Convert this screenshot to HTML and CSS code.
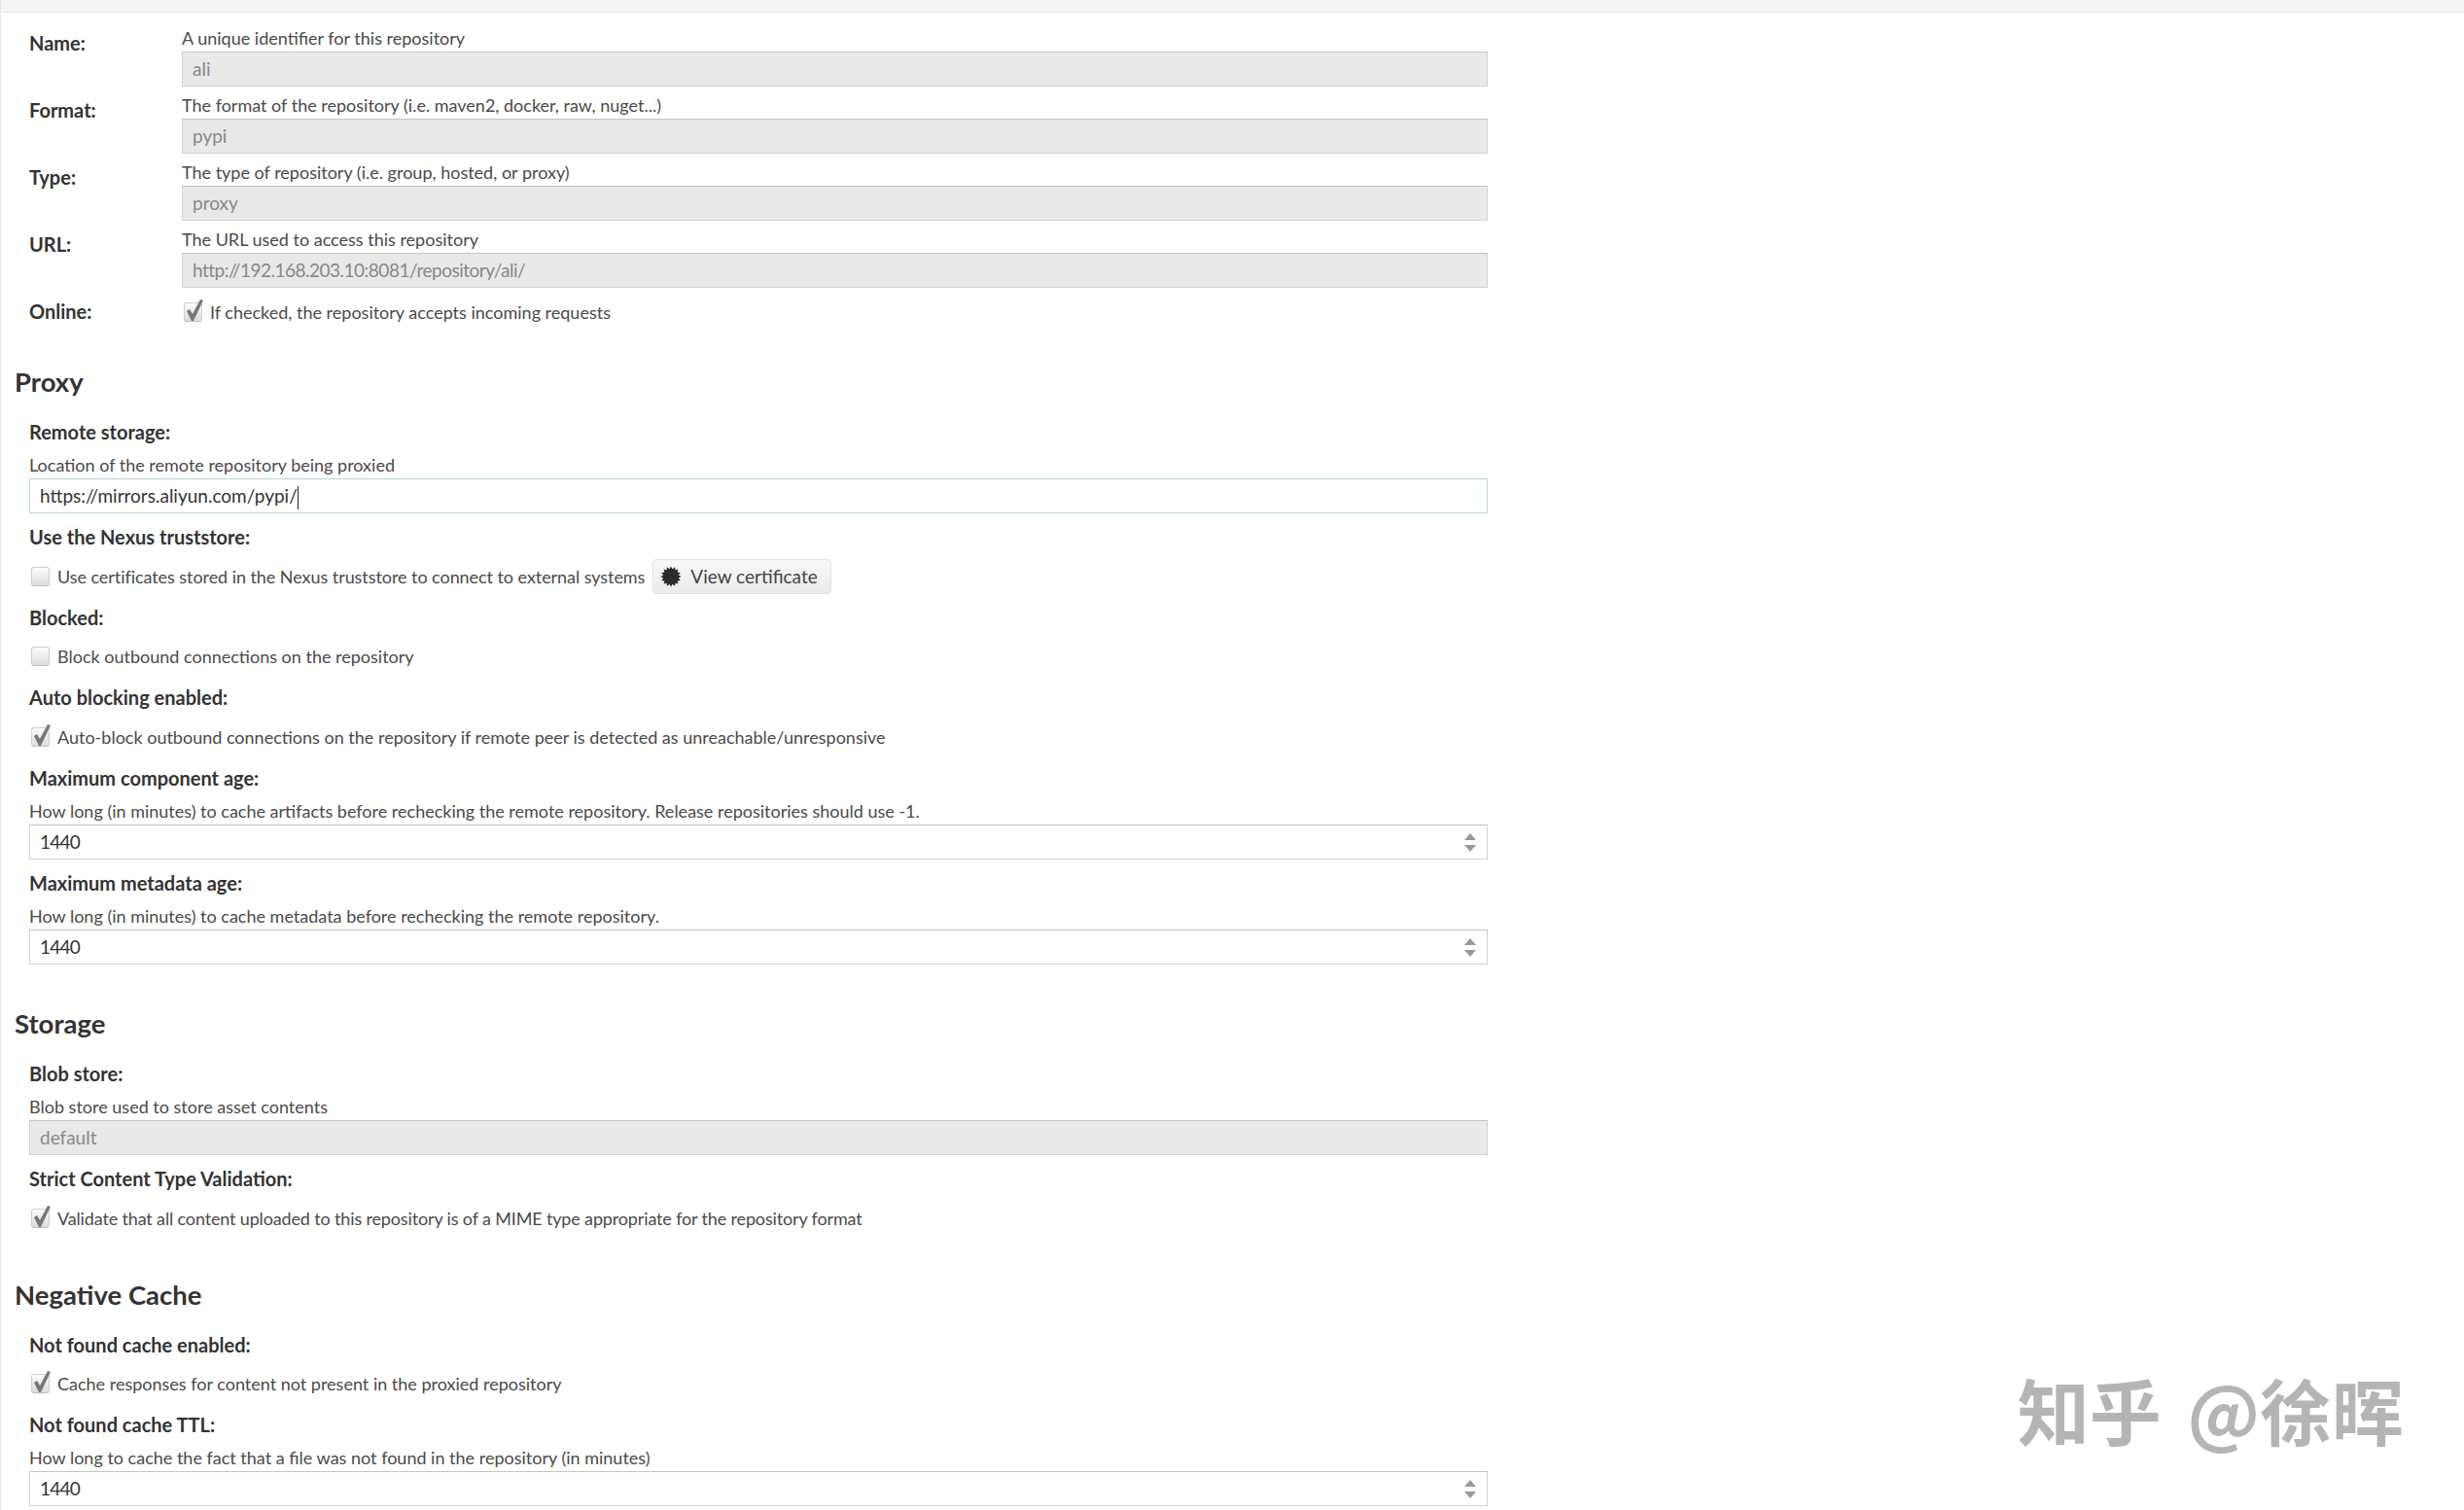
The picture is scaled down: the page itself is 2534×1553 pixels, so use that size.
FILE: index.html
```html
<!DOCTYPE html>
<html>
<head>
  <meta charset="utf-8">
  <title>Repository settings</title>
  <link rel="stylesheet" href="styles.css">
</head>
<body>

  <div class="topbar"></div>

  <div class="panel">

    <div class="summary">
      <div class="label">Name:</div>
      <div>
        <div class="desc under-tight">A unique identifier for this repository</div>
        <div class="field off">ali</div>
      </div>
      <div class="label">Format:</div>
      <div>
        <div class="desc under-tight">The format of the repository (i.e. maven2, docker, raw, nuget...)</div>
        <div class="field off">pypi</div>
      </div>
      <div class="label">Type:</div>
      <div>
        <div class="desc under-tight">The type of repository (i.e. group, hosted, or proxy)</div>
        <div class="field off">proxy</div>
      </div>
      <div class="label">URL:</div>
      <div>
        <div class="desc under-tight">The URL used to access this repository</div>
        <div class="field off tight">http://192.168.203.10:8081/repository/ali/</div>
      </div>
      <div class="label">Online:</div>
      <div class="check-row short">
        <span class="box"><svg viewBox="0 0 22 24"><path d="M4 13l3-2 3 5L18 1l3 1-10 21h-2z" /></svg></span>
        <span class="desc">If checked, the repository accepts incoming requests</span>
      </div>
    </div>

    <h2>Proxy</h2>

    <div class="label">Remote storage:</div>
    <div class="desc under">Location of the remote repository being proxied</div>
    <div class="field active">https://mirrors.aliyun.com/pypi/<span class="caret"></span></div>

    <div class="label next">Use the Nexus truststore:</div>
    <div class="check-row">
      <span class="box"></span>
      <span class="desc snug">Use certificates stored in the Nexus truststore to connect to external systems</span>
      <button class="btn">
        <svg viewBox="-11 -11 22 22"><polygon points="10.5,0 7.85,1.56 9.7,4.02 6.65,4.45 7.42,7.42 4.45,6.65 4.02,9.7 1.56,7.85 0,10.5 -1.56,7.85 -4.02,9.7 -4.45,6.65 -7.42,7.42 -6.65,4.45 -9.7,4.02 -7.85,1.56 -10.5,0 -7.85,-1.56 -9.7,-4.02 -6.65,-4.45 -7.42,-7.42 -4.45,-6.65 -4.02,-9.7 -1.56,-7.85 0,-10.5 1.56,-7.85 4.02,-9.7 4.45,-6.65 7.42,-7.42 6.65,-4.45 9.7,-4.02 7.85,-1.56" /></svg>
        View certificate
      </button>
    </div>

    <div class="label next">Blocked:</div>
    <div class="check-row">
      <span class="box"></span>
      <span class="desc">Block outbound connections on the repository</span>
    </div>

    <div class="label next">Auto blocking enabled:</div>
    <div class="check-row">
      <span class="box"><svg viewBox="0 0 22 24"><path d="M4 13l3-2 3 5L18 1l3 1-10 21h-2z" /></svg></span>
      <span class="desc">Auto-block outbound connections on the repository if remote peer is detected as unreachable/unresponsive</span>
    </div>

    <div class="label next">Maximum component age:</div>
    <div class="desc under">How long (in minutes) to cache artifacts before rechecking the remote repository. Release repositories should use -1.</div>
    <div class="field num">1440<span class="spin"><i class="up"></i><i class="down"></i></span></div>

    <div class="label next">Maximum metadata age:</div>
    <div class="desc under">How long (in minutes) to cache metadata before rechecking the remote repository.</div>
    <div class="field num">1440<span class="spin"><i class="up"></i><i class="down"></i></span></div>

    <h2>Storage</h2>

    <div class="label">Blob store:</div>
    <div class="desc under">Blob store used to store asset contents</div>
    <div class="field off">default</div>

    <div class="label next">Strict Content Type Validation:</div>
    <div class="check-row">
      <span class="box"><svg viewBox="0 0 22 24"><path d="M4 13l3-2 3 5L18 1l3 1-10 21h-2z" /></svg></span>
      <span class="desc snugger">Validate that all content uploaded to this repository is of a MIME type appropriate for the repository format</span>
    </div>

    <h2>Negative Cache</h2>

    <div class="label">Not found cache enabled:</div>
    <div class="check-row">
      <span class="box"><svg viewBox="0 0 22 24"><path d="M4 13l3-2 3 5L18 1l3 1-10 21h-2z" /></svg></span>
      <span class="desc">Cache responses for content not present in the proxied repository</span>
    </div>

    <div class="label next">Not found cache TTL:</div>
    <div class="desc under">How long to cache the fact that a file was not found in the repository (in minutes)</div>
    <div class="field num">1440<span class="spin"><i class="up"></i><i class="down"></i></span></div>

  </div>

  <div class="watermark">知乎 @徐晖</div>

</body>
</html>
```

FILE: styles.css
```css
html, body {
  margin: 0;
  height: 1553px;
  overflow: hidden;
  background: #fff;
}

body {
  font-family: "Lato", "Liberation Sans", sans-serif;
  font-size: 18px;
  line-height: 20px;
  color: #333;
  border-left: 1px solid #e6e6e6;
  box-sizing: border-box;
}

.topbar {
  height: 12px;
  margin-left: -1px;
  background: #f4f4f4;
  border-bottom: 1px solid #e2e2e2;
}

.panel {
  width: 1500px;
  padding: 16px 0 0 29px;
  box-sizing: border-box;
}

.summary {
  display: grid;
  grid-template-columns: 157px 1343px;
  row-gap: 9px;
  width: 1500px;
}

.summary .label {
  padding-top: 5px;
}

.label {
  font-size: 20px;
  font-weight: bold;
  color: #333;
}

.label.next {
  margin-top: 14px;
}

.desc {
  color: #4a4a4a;
  white-space: nowrap;
}

.desc.snug {
  letter-spacing: -0.06px;
}

.desc.snugger {
  letter-spacing: -0.15px;
}

.desc.under {
  margin-top: 14px;
  margin-bottom: 4px;
}

.desc.under-tight {
  margin-bottom: 4px;
}

h2 {
  font-size: 27.5px;
  line-height: 30px;
  font-weight: bold;
  color: #333;
  margin: 46px 0 26px -15px;
}

.field {
  position: relative;
  width: 1500px;
  height: 36px;
  font-size: 19px;
  line-height: 34px;
  padding: 0 10px;
  box-sizing: border-box;
  border: 1px solid #d2d2d2;
  border-top-color: #c4c4c4;
  background: #fff;
  color: #333;
}

.field.tight {
  letter-spacing: -0.5px;
}

.field.num {
  letter-spacing: -0.8px;
}

.summary .field {
  width: 1343px;
}

.field.off {
  background: #e9e9e9;
  color: #888;
}

.field.active {
  border-color: #b9d7dd;
}

.caret {
  display: inline-block;
  width: 1px;
  height: 24px;
  background: #222;
  vertical-align: middle;
}

.spin {
  position: absolute;
  right: 10px;
  top: 8px;
  width: 13px;
  display: flex;
  flex-direction: column;
  gap: 5px;
}

.spin i {
  display: block;
  width: 0;
  height: 0;
  border-left: 6.5px solid transparent;
  border-right: 6.5px solid transparent;
}

.spin .up {
  border-bottom: 7px solid #999;
}

.spin .down {
  border-top: 7px solid #999;
}

.check-row {
  display: flex;
  align-items: center;
  height: 36px;
  margin-top: 12.7px;
}

.check-row.short {
  height: 22px;
  margin-top: 5px;
}

.box {
  position: relative;
  width: 19px;
  height: 20px;
  margin-left: 2px;
  margin-right: 8px;
  flex: none;
  box-sizing: border-box;
  border: 1px solid #cfcfcf;
  border-bottom-color: #bdbdbd;
  border-radius: 3px;
  background: linear-gradient(#fbfbfb, #dedede);
}

.box svg {
  position: absolute;
  left: -2px;
  top: -5px;
  width: 22px;
  height: 24px;
  fill: #777;
}

.btn {
  display: flex;
  align-items: center;
  gap: 9px;
  height: 36px;
  margin-left: 8px;
  padding: 0 13px 0 7px;
  font: inherit;
  font-size: 19px;
  color: #444;
  border: 1px solid #e2e2e2;
  border-radius: 4px;
  background: linear-gradient(#f8f8f8, #ebebeb);
}

.btn svg {
  width: 22px;
  height: 22px;
  fill: #2b2b2b;
}

.watermark {
  position: absolute;
  right: 62px;
  top: 1404px;
  font-family: "Noto Sans CJK SC", sans-serif;
  font-size: 74px;
  line-height: 90px;
  font-weight: bold;
  word-spacing: 10px;
  color: #b5b5b5;
  white-space: nowrap;
}
```
